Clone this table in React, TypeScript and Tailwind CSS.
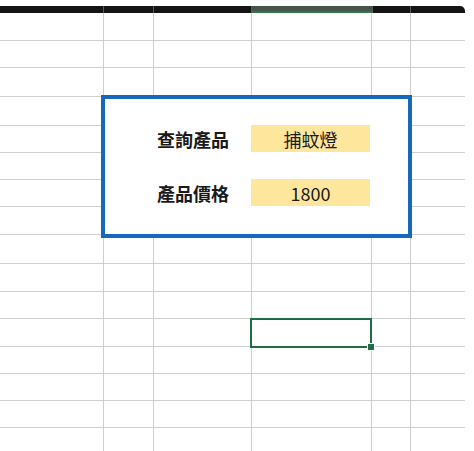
import React from 'react';

const colClasses = [
  'border-r border-[#cfcfcf]',
  'border-r border-[#cfcfcf]',
  'border-r border-[#cfcfcf]',
  'border-r border-[#cfcfcf]',
  'border-r border-[#cfcfcf]',
  '',
];

const ROWS = 16;

const HeaderBar: React.FC = () => (
  <div className="flex h-[7px] mt-[6px] w-[465px] rounded-tr-[5px] overflow-hidden bg-[#141414]">
    <div className="w-[104px] border-r border-[#5a5a5a]" />
    <div className="w-[50px] border-r border-[#5a5a5a]" />
    <div className="w-[98px] border-r border-[#5a5a5a]" />
    <div className="w-[120px] bg-[#465449] border-b-2 border-[#2c7a4c]" />
    <div className="w-[39px] border-l border-r border-[#5a5a5a]" />
    <div className="w-[54px]" />
  </div>
);

const LookupBox: React.FC = () => {
  const rows = [
    { label: '查詢產品', value: '捕蚊燈' },
    { label: '產品價格', value: '1800' },
  ];
  return (
    <div className="absolute left-[101px] top-[95px] w-[311px] h-[143px] border-4 border-[#1668bd] bg-white flex flex-col gap-[27px] pt-[26px]">
      {rows.map((r) => (
        <div key={r.label} className="flex items-center justify-end pr-[38px]">
          <span className="mr-[22px] text-[18px] font-bold text-[#1a1a1a] leading-none">{r.label}</span>
          <span className="w-[119px] h-[27px] bg-[#fee79d] flex items-center justify-center text-[18px] text-[#1a1a1a] leading-none">
            {r.value}
          </span>
        </div>
      ))}
    </div>
  );
};

export default function App() {
  return (
    <div
      className="relative w-[474px] h-[451px] overflow-hidden bg-white"
      style={{ fontFamily: '"Noto Sans CJK TC", "Noto Sans", sans-serif' }}
    >
      <HeaderBar />
      <div className="grid w-[465px] grid-cols-[104px_50px_98px_120px_39px_54px] grid-rows-[28px_27px_29px_29px_27px_27px_27px_28px_29px_28px_27px_28px_27px_27px_27px_30px]">
        {Array.from({ length: ROWS }).map((_, r) =>
          colClasses.map((c, ci) => (
            <div
              key={`${r}-${ci}`}
              className={`${c} ${r < ROWS - 1 ? 'border-b border-[#cfcfcf]' : ''}`}
            />
          ))
        )}
      </div>

      <LookupBox />

      <div className="absolute left-[250px] top-[318px] w-[122px] h-[30px] border-2 border-[#1f6d42]">
        <div className="absolute -right-[5px] -bottom-[5px] w-[8px] h-[8px] bg-[#1f6d42] border border-white" />
      </div>
    </div>
  );
}
